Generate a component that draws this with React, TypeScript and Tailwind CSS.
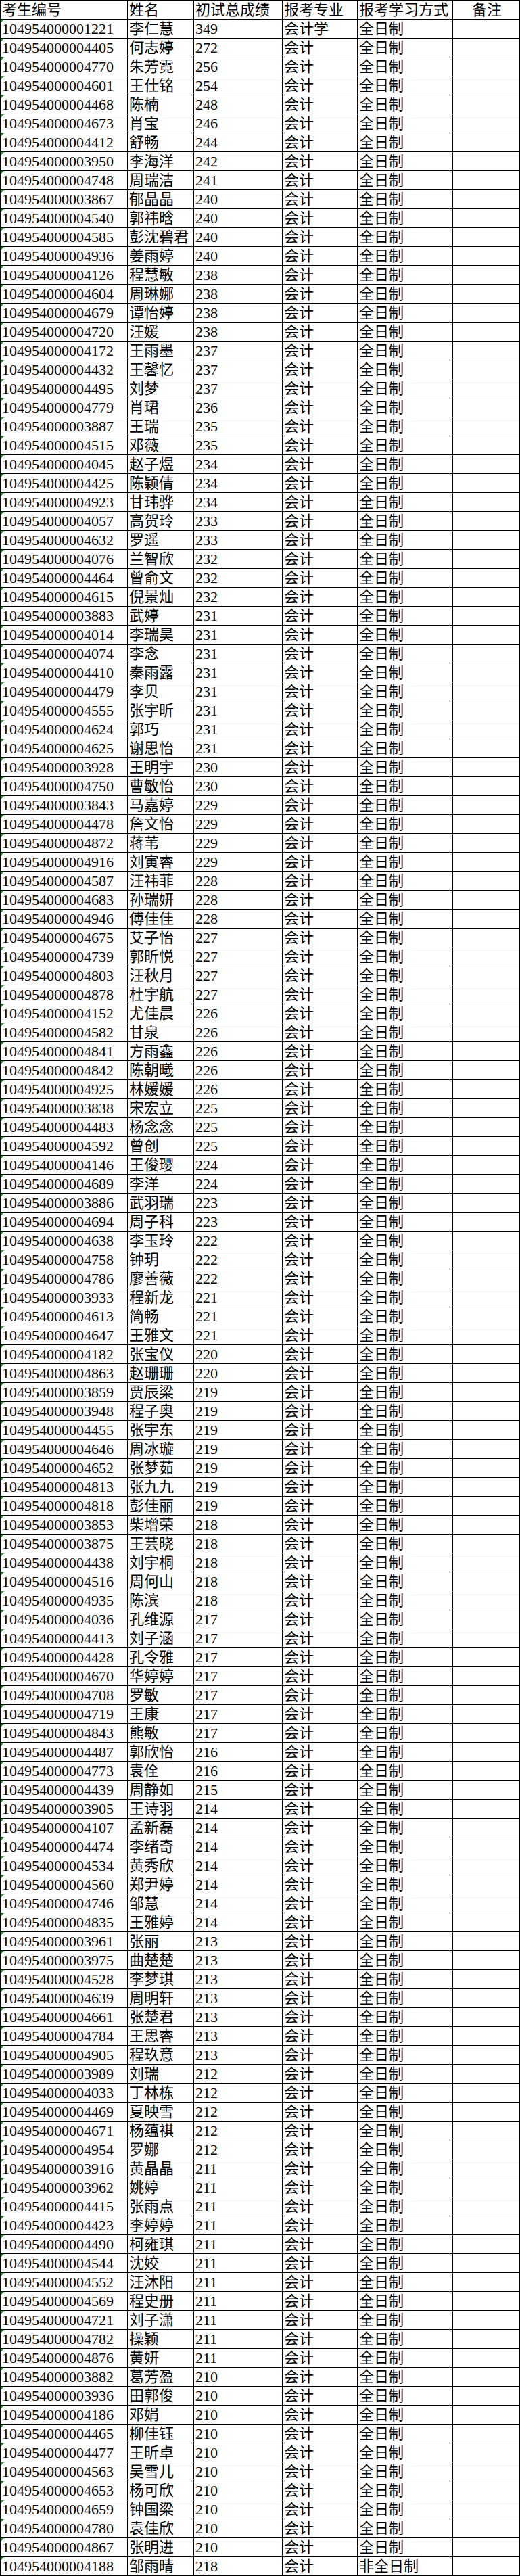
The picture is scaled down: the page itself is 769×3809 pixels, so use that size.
type Row = [string, string, number]

// 考生编号, 姓名, 初试总成绩 — 报考专业 / 学习方式 handled below
const rows: Row[] = [
  ['104954000001221', '李仁慧', 349],
  ['104954000004405', '何志婷', 272],
  ['104954000004770', '朱芳霓', 256],
  ['104954000004601', '王仕铭', 254],
  ['104954000004468', '陈楠', 248],
  ['104954000004673', '肖宝', 246],
  ['104954000004412', '舒畅', 244],
  ['104954000003950', '李海洋', 242],
  ['104954000004748', '周瑞洁', 241],
  ['104954000003867', '郁晶晶', 240],
  ['104954000004540', '郭祎晗', 240],
  ['104954000004585', '彭沈碧君', 240],
  ['104954000004936', '姜雨婷', 240],
  ['104954000004126', '程慧敏', 238],
  ['104954000004604', '周琳娜', 238],
  ['104954000004679', '谭怡婷', 238],
  ['104954000004720', '汪媛', 238],
  ['104954000004172', '王雨墨', 237],
  ['104954000004432', '王馨忆', 237],
  ['104954000004495', '刘梦', 237],
  ['104954000004779', '肖珺', 236],
  ['104954000003887', '王瑞', 235],
  ['104954000004515', '邓薇', 235],
  ['104954000004045', '赵子煜', 234],
  ['104954000004425', '陈颖倩', 234],
  ['104954000004923', '甘玮骅', 234],
  ['104954000004057', '高贺玲', 233],
  ['104954000004632', '罗遥', 233],
  ['104954000004076', '兰智欣', 232],
  ['104954000004464', '曾俞文', 232],
  ['104954000004615', '倪景灿', 232],
  ['104954000003883', '武婷', 231],
  ['104954000004014', '李瑞昊', 231],
  ['104954000004074', '李念', 231],
  ['104954000004410', '秦雨露', 231],
  ['104954000004479', '李贝', 231],
  ['104954000004555', '张宇昕', 231],
  ['104954000004624', '郭巧', 231],
  ['104954000004625', '谢思怡', 231],
  ['104954000003928', '王明宇', 230],
  ['104954000004750', '曹敏怡', 230],
  ['104954000003843', '马嘉婷', 229],
  ['104954000004478', '詹文怡', 229],
  ['104954000004872', '蒋苇', 229],
  ['104954000004916', '刘寅睿', 229],
  ['104954000004587', '汪祎菲', 228],
  ['104954000004683', '孙瑞妍', 228],
  ['104954000004946', '傅佳佳', 228],
  ['104954000004675', '艾子怡', 227],
  ['104954000004739', '郭昕悦', 227],
  ['104954000004803', '汪秋月', 227],
  ['104954000004878', '杜宇航', 227],
  ['104954000004152', '尤佳晨', 226],
  ['104954000004582', '甘泉', 226],
  ['104954000004841', '方雨鑫', 226],
  ['104954000004842', '陈朝曦', 226],
  ['104954000004925', '林媛媛', 226],
  ['104954000003838', '宋宏立', 225],
  ['104954000004483', '杨念念', 225],
  ['104954000004592', '曾创', 225],
  ['104954000004146', '王俊璎', 224],
  ['104954000004689', '李洋', 224],
  ['104954000003886', '武羽瑞', 223],
  ['104954000004694', '周子科', 223],
  ['104954000004638', '李玉玲', 222],
  ['104954000004758', '钟玥', 222],
  ['104954000004786', '廖善薇', 222],
  ['104954000003933', '程新龙', 221],
  ['104954000004613', '简畅', 221],
  ['104954000004647', '王雅文', 221],
  ['104954000004182', '张宝仪', 220],
  ['104954000004863', '赵珊珊', 220],
  ['104954000003859', '贾辰梁', 219],
  ['104954000003948', '程子奥', 219],
  ['104954000004455', '张宇东', 219],
  ['104954000004646', '周冰璇', 219],
  ['104954000004652', '张梦茹', 219],
  ['104954000004813', '张九九', 219],
  ['104954000004818', '彭佳丽', 219],
  ['104954000003853', '柴增荣', 218],
  ['104954000003875', '王芸晓', 218],
  ['104954000004438', '刘宇桐', 218],
  ['104954000004516', '周何山', 218],
  ['104954000004935', '陈滨', 218],
  ['104954000004036', '孔维源', 217],
  ['104954000004413', '刘子涵', 217],
  ['104954000004428', '孔令雅', 217],
  ['104954000004670', '华婷婷', 217],
  ['104954000004708', '罗敏', 217],
  ['104954000004719', '王康', 217],
  ['104954000004843', '熊敏', 217],
  ['104954000004487', '郭欣怡', 216],
  ['104954000004773', '袁佺', 216],
  ['104954000004439', '周静如', 215],
  ['104954000003905', '王诗羽', 214],
  ['104954000004107', '孟新磊', 214],
  ['104954000004474', '李绪奇', 214],
  ['104954000004534', '黄秀欣', 214],
  ['104954000004560', '郑尹婷', 214],
  ['104954000004746', '邹慧', 214],
  ['104954000004835', '王雅婷', 214],
  ['104954000003961', '张丽', 213],
  ['104954000003975', '曲楚楚', 213],
  ['104954000004528', '李梦琪', 213],
  ['104954000004639', '周明轩', 213],
  ['104954000004661', '张楚君', 213],
  ['104954000004784', '王思睿', 213],
  ['104954000004905', '程玖意', 213],
  ['104954000003989', '刘瑞', 212],
  ['104954000004033', '丁林栋', 212],
  ['104954000004469', '夏映雪', 212],
  ['104954000004671', '杨蕴祺', 212],
  ['104954000004954', '罗娜', 212],
  ['104954000003916', '黄晶晶', 211],
  ['104954000003962', '姚婷', 211],
  ['104954000004415', '张雨点', 211],
  ['104954000004423', '李婷婷', 211],
  ['104954000004490', '柯雍琪', 211],
  ['104954000004544', '沈姣', 211],
  ['104954000004552', '汪沐阳', 211],
  ['104954000004569', '程史册', 211],
  ['104954000004721', '刘子潇', 211],
  ['104954000004782', '操颖', 211],
  ['104954000004876', '黄妍', 211],
  ['104954000003882', '葛芳盈', 210],
  ['104954000003936', '田郭俊', 210],
  ['104954000004186', '邓娟', 210],
  ['104954000004465', '柳佳钰', 210],
  ['104954000004477', '王昕卓', 210],
  ['104954000004563', '吴雪儿', 210],
  ['104954000004653', '杨可欣', 210],
  ['104954000004659', '钟国梁', 210],
  ['104954000004780', '袁佳欣', 210],
  ['104954000004867', '张明进', 210],
  ['104954000004188', '邹雨晴', 218],
]

const grid = 'grid h-[28px] grid-cols-[188px_98px_131px_111px_141px_99px] border-b border-black'
const cell = 'overflow-hidden whitespace-nowrap border-r border-black pl-[2px] leading-[27px]'

export default function App() {
  return (
    <div className="w-[769px] bg-white font-['Liberation_Serif','Noto_Sans_CJK_SC',serif] text-[22px] text-black">
      <div className="border-l border-t border-black">
        <div className={grid}>
          <div className={`${cell} pl-[1px]`}>考生编号</div>
          <div className={cell}>姓名</div>
          <div className={cell}>初试总成绩</div>
          <div className={cell}>报考专业</div>
          <div className={cell}>报考学习方式</div>
          <div className={`${cell} pl-0 text-center`}>备注</div>
        </div>
        {rows.map(([id, name, score], i) => (
          <div key={id} className={grid}>
            <div className={`${cell} relative pl-[1px]`}>
              <span className="absolute left-0 top-0 h-0 w-0 border-r-[5px] border-t-[5px] border-r-transparent border-t-[#1a8f2a]" />
              {id}
            </div>
            <div className={cell}>{name}</div>
            <div className={cell}>{score}</div>
            <div className={cell}>{i === 0 ? '会计学' : '会计'}</div>
            <div className={cell}>{i === rows.length - 1 ? '非全日制' : '全日制'}</div>
            <div className={cell} />
          </div>
        ))}
      </div>
    </div>
  )
}
